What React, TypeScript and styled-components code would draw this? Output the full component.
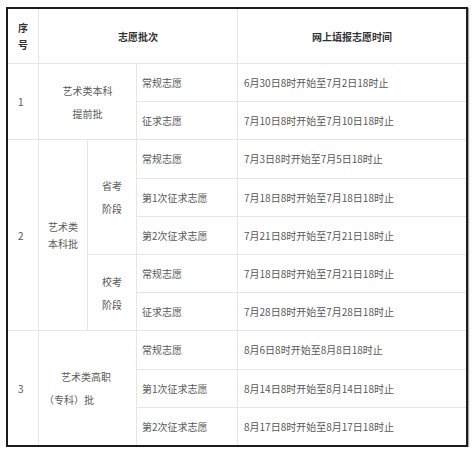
import React from "react";
import styled, { createGlobalStyle } from "styled-components";

const GlobalStyle = createGlobalStyle`
  html, body {
    margin: 0;
    padding: 0;
    background: #ffffff;
  }
  body {
    font-family: "Noto Sans CJK SC", "Noto Sans", sans-serif;
  }
`;

const Frame = styled.div`
  box-sizing: border-box;
  width: 462px;
  height: 440px;
  margin: 7px 0 0 6px;
  border: 2px solid #1c1c1c;
  box-shadow: 1px 1px 1px rgba(0, 0, 0, 0.35);
  background: #e6e6e6;
  display: grid;
  grid-template-columns: 30px 48px 48px 100px 1fr;
  grid-template-rows: 54px repeat(10, 1fr);
  gap: 1px;
`;

type CellProps = {
  $row: string;
  $col: string;
  $align?: "left" | "center";
  $lh?: number;
  $pad?: number;
  $indent?: number;
  $head?: boolean;
};

const Cell = styled.div<CellProps>`
  grid-row: ${(p) => p.$row};
  grid-column: ${(p) => p.$col};
  background: #ffffff;
  display: flex;
  flex-direction: column;
  justify-content: center;
  align-items: ${(p) => (p.$align === "left" ? "flex-start" : "center")};
  padding: 0 ${(p) => p.$pad ?? 6}px;
  font-size: 10px;
  line-height: ${(p) => p.$lh ?? 23}px;
  color: ${(p) => (p.$head ? "#333333" : "#585858")};
  font-weight: ${(p) => (p.$head ? 700 : 400)};
  white-space: nowrap;
`;

const Line = styled.span<{ $indent?: number }>`
  display: block;
  padding-left: ${(p) => p.$indent ?? 0}px;
`;

type Item = { name: string; time: string };

const items: Item[] = [
  { name: "常规志愿", time: "6月30日8时开始至7月2日18时止" },
  { name: "征求志愿", time: "7月10日8时开始至7月10日18时止" },
  { name: "常规志愿", time: "7月3日8时开始至7月5日18时止" },
  { name: "第1次征求志愿", time: "7月18日8时开始至7月18日18时止" },
  { name: "第2次征求志愿", time: "7月21日8时开始至7月21日18时止" },
  { name: "常规志愿", time: "7月18日8时开始至7月21日18时止" },
  { name: "征求志愿", time: "7月28日8时开始至7月28日18时止" },
  { name: "常规志愿", time: "8月6日8时开始至8月8日18时止" },
  { name: "第1次征求志愿", time: "8月14日8时开始至8月14日18时止" },
  { name: "第2次征求志愿", time: "8月17日8时开始至8月17日18时止" },
];

export default function App() {
  return (
    <>
      <GlobalStyle />
      <Frame>
        <Cell $row="1" $col="1" $lh={17} $head>
          <Line>序</Line>
          <Line>号</Line>
        </Cell>
        <Cell $row="1" $col="2 / span 3" $head>
          志愿批次
        </Cell>
        <Cell $row="1" $col="5" $head>
          网上填报志愿时间
        </Cell>

        <Cell $row="2 / span 2" $col="1" $align="left" $pad={10}>
          1
        </Cell>
        <Cell $row="2 / span 2" $col="2 / span 2">
          <Line>艺术类本科</Line>
          <Line>提前批</Line>
        </Cell>

        <Cell $row="4 / span 5" $col="1" $align="left" $pad={10}>
          2
        </Cell>
        <Cell $row="4 / span 5" $col="2" $lh={17} $pad={3}>
          <Line>艺术类</Line>
          <Line>本科批</Line>
        </Cell>
        <Cell $row="4 / span 3" $col="3" $pad={3}>
          <Line>省考</Line>
          <Line>阶段</Line>
        </Cell>
        <Cell $row="7 / span 2" $col="3" $pad={3}>
          <Line>校考</Line>
          <Line>阶段</Line>
        </Cell>

        <Cell $row="9 / span 3" $col="1" $align="left" $pad={10}>
          3
        </Cell>
        <Cell $row="9 / span 3" $col="2 / span 2" $align="left" $pad={5}>
          <Line $indent={17}>艺术类高职</Line>
          <Line>（专科）批</Line>
        </Cell>

        {items.map((it, i) => (
          <React.Fragment key={i}>
            <Cell $row={String(i + 2)} $col="4" $align="left" $pad={5}>
              {it.name}
            </Cell>
            <Cell $row={String(i + 2)} $col="5" $align="left" $pad={6}>
              {it.time}
            </Cell>
          </React.Fragment>
        ))}
      </Frame>
    </>
  );
}
